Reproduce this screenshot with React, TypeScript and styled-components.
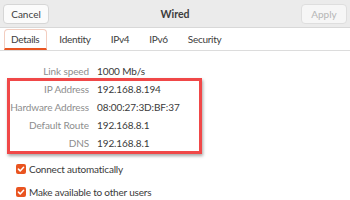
import styled, { createGlobalStyle } from 'styled-components'

const GlobalStyle = createGlobalStyle`
  html, body { margin: 0; padding: 0; background: #ffffff; }
  body { font-family: Lato, "Liberation Sans", sans-serif; }
`

const ORANGE = '#e95420'

const rows = [
  { label: 'Link speed', value: '1000 Mb/s' },
  { label: 'IP Address', value: '192.168.8.194' },
  { label: 'Hardware Address', value: '08:00:27:3D:BF:37' },
  { label: 'Default Route', value: '192.168.8.1' },
  { label: 'DNS', value: '192.168.8.1' },
]

const tabs = ['Details', 'Identity', 'IPv4', 'IPv6', 'Security']

export default function App() {
  return (
    <Window>
      <GlobalStyle />
      <HeaderBar>
        <Button>Cancel</Button>
        <Title>Wired</Title>
        <Button disabled>Apply</Button>
      </HeaderBar>
      <TabBar>
        {tabs.map((t, i) => (
          <Tab key={t} active={i === 0}>{t}</Tab>
        ))}
      </TabBar>
      <Body>
        <InfoGrid>
          {rows.map(r => (
            <Row key={r.label}>
              <Label>{r.label}</Label>
              <Value>{r.value}</Value>
            </Row>
          ))}
        </InfoGrid>
        <Checks>
          <CheckRow>
            <CheckBox><CheckMark /></CheckBox>
            Connect automatically
          </CheckRow>
          <CheckRow>
            <CheckBox><CheckMark /></CheckBox>
            Make available to other users
          </CheckRow>
        </Checks>
        <Highlight />
      </Body>
    </Window>
  )
}

function CheckMark() {
  return (
    <svg width="8" height="8" viewBox="0 0 8 8">
      <path d="M1.4 4.1 L3.2 5.9 L6.6 2.3" fill="none" stroke="#fff" strokeWidth="1.5" strokeLinecap="round" strokeLinejoin="round" />
    </svg>
  )
}

const Window = styled.div`
  width: 350px;
  height: 200px;
  overflow: hidden;
  background: #ffffff;
  color: #3d3d3d;
`
const HeaderBar = styled.div`
  height: 27px;
  display: flex;
  align-items: center;
  justify-content: space-between;
  padding: 0 3px;
  background: #ebebeb;
  border-bottom: 1px solid #d8d8d8;
  box-sizing: content-box;
`
const Title = styled.div`
  font-weight: 700;
  font-size: 10.5px;
  color: #3c3c3c;
`
const Button = styled.button`
  width: 46px;
  height: 20px;
  margin-top: 1px;
  padding: 0;
  border: 1px solid #d6d6d6;
  border-radius: 4px;
  background: #fbfbfb;
  font-family: inherit;
  font-size: 10px;
  color: #3d3d3d;
  &:disabled {
    color: #b5b5b5;
    background: #f6f6f6;
    border-color: #dedede;
  }
`
const TabBar = styled.div`
  display: flex;
  gap: 5px;
  padding: 0 4px;
  height: 22px;
  border-bottom: 1px solid #dcdcdc;
`
const Tab = styled.div<{ active: boolean }>`
  display: flex;
  align-items: center;
  margin-top: 1px;
  font-size: 10px;
  letter-spacing: -0.3px;
  color: #3d3d3d;
  border: 1px solid ${({ active }) => (active ? '#f3cdbf' : 'transparent')};
  border-bottom: 2px solid ${({ active }) => (active ? ORANGE : 'transparent')};
  border-radius: 4px 4px 0 0;
  padding: 0 7px 0 6px;
`
const Body = styled.div`
  position: relative;
  padding-top: 11px;
`
const InfoGrid = styled.div`
  display: grid;
  grid-template-columns: 89px auto;
  column-gap: 8px;
`
const Row = styled.div`
  display: contents;
`
const Label = styled.div`
  height: 18px;
  line-height: 18px;
  text-align: right;
  font-size: 10px;
  letter-spacing: -0.1px;
  color: #8d8d8d;
`
const Value = styled.div`
  height: 18px;
  line-height: 18px;
  font-size: 10px;
  letter-spacing: -0.1px;
  color: #3a3a3a;
`
const Checks = styled.div`
  display: flex;
  flex-direction: column;
  gap: 7px;
  padding: 9px 0 0 16px;
`
const CheckRow = styled.label`
  display: flex;
  align-items: center;
  gap: 3px;
  height: 16px;
  font-size: 10px;
  letter-spacing: -0.2px;
  color: #3a3a3a;
`
const CheckBox = styled.span`
  width: 10px;
  height: 10px;
  border-radius: 2px;
  background: ${ORANGE};
  display: flex;
  align-items: center;
  justify-content: center;
`
const Highlight = styled.div`
  position: absolute;
  left: 7px;
  top: 27px;
  width: 189px;
  height: 70px;
  border: 3px solid #f04848;
  box-shadow: 1px 2px 3px rgba(0, 0, 0, 0.35);
  pointer-events: none;
`
